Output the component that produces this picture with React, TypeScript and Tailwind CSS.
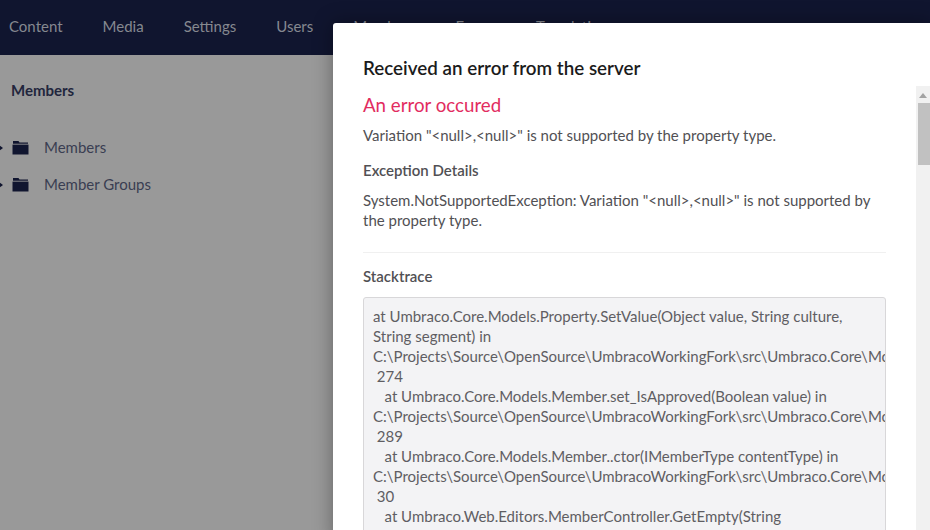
import React from "react";

const nav = ["Content", "Media", "Settings", "Users", "Members", "Forms", "Translation"];

const stack = [
  "at Umbraco.Core.Models.Property.SetValue(Object value, String culture,",
  "String segment) in",
  "C:\\Projects\\Source\\OpenSource\\UmbracoWorkingFork\\src\\Umbraco.Core\\Mo",
  " 274",
  "   at Umbraco.Core.Models.Member.set_IsApproved(Boolean value) in",
  "C:\\Projects\\Source\\OpenSource\\UmbracoWorkingFork\\src\\Umbraco.Core\\Mo",
  " 289",
  "   at Umbraco.Core.Models.Member..ctor(IMemberType contentType) in",
  "C:\\Projects\\Source\\OpenSource\\UmbracoWorkingFork\\src\\Umbraco.Core\\Mo",
  " 30",
  "   at Umbraco.Web.Editors.MemberController.GetEmpty(String",
];

const FolderIcon = () => (
  <svg width="17" height="15" viewBox="0 0 17 15" className="shrink-0">
    <path d="M1 1h5.5l1 1.5H16v1.2H1z" fill="#10152f" />
    <path d="M0.5 4.6h16v9.9h-16z" fill="#10152f" />
  </svg>
);

const TreeItem = ({ label }: { label: string }) => (
  <div className="flex items-center h-[37px]">
    <div className="-ml-px mr-[9px] h-0 w-0 border-y-[3px] border-l-[4px] border-y-transparent border-l-[#10152f]" />
    <FolderIcon />
    <span className="ml-[15px] text-[15px] text-[#3a3e52]">{label}</span>
  </div>
);

export default function App() {
  return (
    <div className="relative h-[530px] w-[930px] overflow-hidden bg-[#999999] font-['Lato','Open_Sans',sans-serif]">
      {/* top bar */}
      <div className="flex h-[55px] items-center gap-[40px] bg-[#10152f] pl-[9px] pb-[3px] text-[15px] text-[#85888f]">
        {nav.map((n) => (
          <span key={n}>{n}</span>
        ))}
      </div>

      {/* tree */}
      <div className="pt-[25px]">
        <div className="pl-[11px] text-[15px] font-bold leading-[20px] text-[#22263d]">Members</div>
        <div className="mt-[29px]">
          <TreeItem label="Members" />
          <TreeItem label="Member Groups" />
        </div>
      </div>

      {/* dialog */}
      <div className="absolute left-[333px] top-[23px] h-[520px] w-[597px] rounded-tl-[3px] bg-white shadow-[0_0_20px_rgba(0,0,0,0.35)]">
        <div className="absolute right-0 top-[63px] bottom-0 flex w-[14px] flex-col items-center bg-[#f1f1f1]">
          <div className="mt-[7px] h-0 w-0 border-x-[4px] border-b-[5px] border-x-transparent border-b-[#a3a3a3]" />
          <div className="mt-[5px] ml-[2px] h-[62px] w-[12px] bg-[#c1c1c1]" />
        </div>

        <div className="w-[553px] pl-[30px] pt-[33px]">
          <h1 className="text-[18.8px] font-semibold leading-[24px] text-[#1b1b1b]">Received an error from the server</h1>
          <h2 className="mt-[13px] text-[18.7px] leading-[24px] text-[#e22c60]">An error occured</h2>
          <p className="mt-[8px] text-[15px] leading-[20px] text-[#515054]">
            Variation "&lt;null&gt;,&lt;null&gt;" is not supported by the property type.
          </p>
          <h3 className="mt-[15px] text-[15px] font-semibold leading-[20px] text-[#515054]">Exception Details</h3>
          <p className="mt-[10px] text-[15px] leading-[20px] text-[#515054]">
            System.NotSupportedException: Variation "&lt;null&gt;,&lt;null&gt;" is not supported by the property type.
          </p>
          <div className="mt-[22px] h-px bg-[#f0f0f0]" />
          <h3 className="mt-[13px] text-[15px] font-semibold leading-[20px] text-[#515054]">Stacktrace</h3>
          <div className="mt-[11px] h-[300px] overflow-hidden rounded-[3px] border border-[#d8d7d9] bg-[#f3f3f5] pl-[9px] pt-[8px] text-[15px] leading-[20px] text-[#5f5e63]">
            {stack.map((line, i) => (
              <div key={i} className="whitespace-pre">{line}</div>
            ))}
          </div>
        </div>
      </div>
    </div>
  );
}
